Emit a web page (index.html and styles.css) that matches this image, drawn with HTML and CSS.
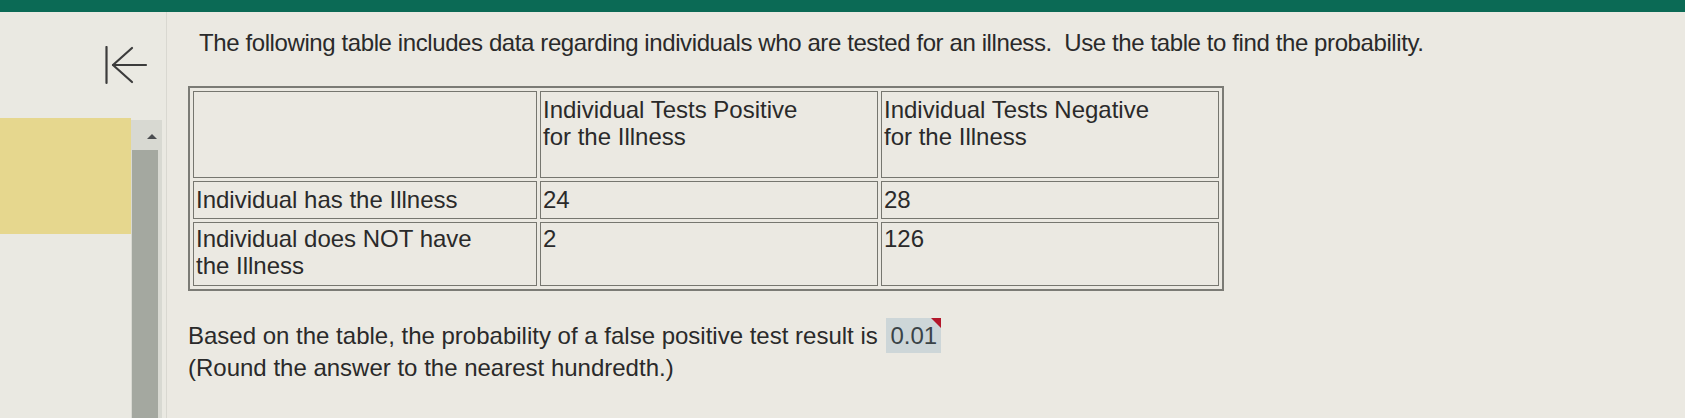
FILE: index.html
```html
<!DOCTYPE html>
<html lang="en">
<head>
<meta charset="utf-8">
<title>Probability question</title>
<link rel="stylesheet" href="styles.css">
</head>
<body>
<div class="topbar"></div>
<div class="layout">
  <aside class="sidebar">
    <div class="back">
      <svg class="back-icon" width="44" height="40" viewBox="0 0 44 40" aria-hidden="true">
        <line x1="2.5" y1="1" x2="2.5" y2="37" />
        <line x1="9" y1="19" x2="42" y2="19" />
        <polyline points="28,2 9,19 28,36" />
      </svg>
    </div>
    <div class="lower">
      <div class="highlight"></div>
      <div class="scroll">
        <div class="scroll-up"><span class="tri"></span></div>
        <div class="thumb"></div>
      </div>
    </div>
  </aside>
  <main class="main">
    <p class="prompt">The following table includes data regarding individuals who are tested for an illness.&nbsp; Use the table to find the probability.</p>
    <table class="data">
      <colgroup>
        <col class="c1"><col class="c2"><col class="c3">
      </colgroup>
      <tr class="head">
        <td></td>
        <td>Individual Tests Positive<br>for the Illness</td>
        <td>Individual Tests Negative<br>for the Illness</td>
      </tr>
      <tr class="r1">
        <td>Individual has the Illness</td>
        <td>24</td>
        <td>28</td>
      </tr>
      <tr class="r2">
        <td>Individual does NOT have<br>the Illness</td>
        <td>2</td>
        <td>126</td>
      </tr>
    </table>
    <p class="answer-line">Based on the table, the probability of a false positive test result is <span class="answer">0.01</span></p>
    <p class="note">(Round the answer to the nearest hundredth.)</p>
  </main>
</div>
</body>
</html>
```

FILE: styles.css
```css
* { box-sizing: border-box; }
html, body {
  margin: 0;
  padding: 0;
  background: #ebe9e2;
  font-family: "Liberation Sans", Arial, sans-serif;
  color: #2a2a2a;
  overflow: hidden;
}
.topbar {
  height: 12px;
  background: #0b6a55;
}
.layout {
  display: flex;
  height: 406px;
}
.sidebar {
  width: 167px;
  flex: none;
  display: flex;
  flex-direction: column;
  background: #eae9e2;
  border-right: 1px solid #d9d8d1;
}
.back {
  height: 106px;
  padding: 34px 0 0 104px;
}
.back-icon line, .back-icon polyline {
  stroke: #3c3c3c;
  stroke-width: 2.2;
  fill: none;
  stroke-linecap: round;
  stroke-linejoin: round;
}
.lower {
  flex: 1;
  display: flex;
  align-items: flex-start;
}
.highlight {
  width: 131px;
  height: 116px;
  background: #e6d78e;
}
.scroll {
  width: 31px;
  align-self: stretch;
  margin-top: 2px;
  display: flex;
  flex-direction: column;
  background: #d8d9d2;
}
.scroll-up {
  height: 30px;
  display: flex;
  justify-content: flex-end;
  padding: 14px 5px 0 0;
}
.tri {
  width: 0;
  height: 0;
  border-left: 5px solid transparent;
  border-right: 5px solid transparent;
  border-bottom: 5px solid #4a4d50;
}
.thumb {
  flex: 1;
  margin: 0 4px 0 1px;
  background: #a4a8a0;
}
.main {
  flex: 1;
  padding: 17px 0 0 21px;
  font-size: 24px;
}
.prompt {
  margin: 0 0 29px 11px;
  line-height: 28px;
  letter-spacing: -0.4px;
}
.data {
  border-collapse: separate;
  border-spacing: 3px;
  border: 2px solid #7b7b75;
  table-layout: fixed;
  width: 1034px;
  font-size: 24px;
  line-height: 27px;
}
.c1 { width: 344px; }
.c2 { width: 338px; }
.c3 { width: 338px; }
.data td {
  border: 1px solid #76766f;
  vertical-align: top;
  padding: 4px 3px 0 2px;
}
.head td { height: 87px; }
.r1 td { height: 38px; padding-top: 4px; }
.r2 td { height: 64px; padding-top: 2px; }
.answer-line {
  margin: 27px 0 0 0;
  line-height: 31px;
}
.answer {
  position: relative;
  display: inline-block;
  margin-left: 2px;
  padding: 4px 4px;
  line-height: 27px;
  background: #cdd6d8;
  color: #3a4347;
}
.answer::after {
  content: "";
  position: absolute;
  top: 0;
  right: 0;
  width: 0;
  height: 0;
  border-top: 10px solid #b3172b;
  border-left: 10px solid transparent;
}
.note {
  margin: 0;
  line-height: 30px;
}
```
